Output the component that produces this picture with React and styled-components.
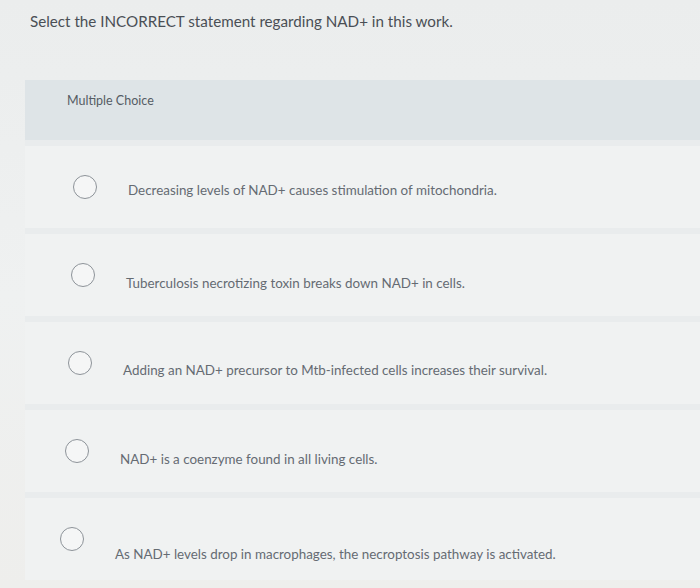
import React from "react";
import styled, { createGlobalStyle } from "styled-components";

const GlobalStyle = createGlobalStyle`
  html, body {
    margin: 0;
    padding: 0;
    background: #eceeee;
    font-family: "Lato", "Open Sans", sans-serif;
  }
`;

const Page = styled.div`
  width: 700px;
  height: 588px;
  overflow: hidden;
  background: linear-gradient(180deg, #ebeded 0%, #eff1f1 50%, #eeeeec 100%);
`;

const Question = styled.div`
  padding: 11px 0 0 30px;
  font-size: 15.2px;
  color: #4a4f55;
  line-height: 20px;
`;

const Card = styled.div`
  margin: 49px 0 0 25px;
  background: #eef1f2;
`;

const CardHeader = styled.div`
  height: 60px;
  box-sizing: border-box;
  padding: 13px 0 0 42px;
  background: #dee4e7;
  font-size: 12.5px;
  color: #555c64;
`;

const Option = styled.label`
  display: flex;
  align-items: center;
  height: 82px;
  padding-left: ${(p) => p.$indent}px;
  border-top: 6px solid #e9eced;
  background: #f0f2f2;
`;

const Radio = styled.span`
  width: 22px;
  height: 22px;
  border-radius: 50%;
  border: 1.5px solid #8d9399;
  background: #f5f6f6;
  flex-shrink: 0;
`;

const OptionText = styled.span`
  margin-left: 31px;
  margin-top: ${(p) => p.$drop}px;
  font-size: 13.4px;
  color: #656b72;
`;

const options = [
  { text: "Decreasing levels of NAD+ causes stimulation of mitochondria.", indent: 48, drop: 6 },
  { text: "Tuberculosis necrotizing toxin breaks down NAD+ in cells.", indent: 46, drop: 16 },
  { text: "Adding an NAD+ precursor to Mtb-infected cells increases their survival.", indent: 43, drop: 14 },
  { text: "NAD+ is a coenzyme found in all living cells.", indent: 40, drop: 16 },
  { text: "As NAD+ levels drop in macrophages, the necroptosis pathway is activated.", indent: 35, drop: 30 },
];

export default function App() {
  return (
    <Page>
      <GlobalStyle />
      <Question>Select the INCORRECT statement regarding NAD+ in this work.</Question>
      <Card>
        <CardHeader>Multiple Choice</CardHeader>
        {options.map((o) => (
          <Option key={o.text} $indent={o.indent}>
            <Radio />
            <OptionText $drop={o.drop}>{o.text}</OptionText>
          </Option>
        ))}
      </Card>
    </Page>
  );
}
